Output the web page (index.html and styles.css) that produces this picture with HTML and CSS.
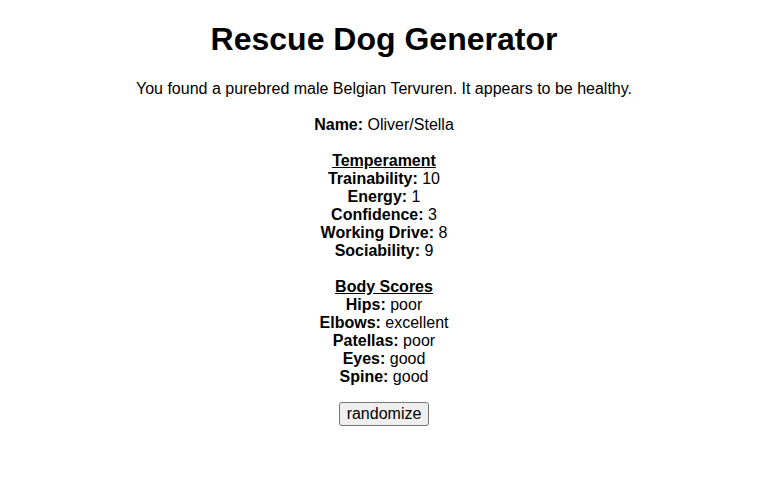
FILE: index.html
```html
<!DOCTYPE html>
<html>
<head>
<meta charset="utf-8">
<title>Rescue Dog Generator</title>
<link rel="stylesheet" href="styles.css">
</head>
<body>
<div class="app">
  <h1 class="title">Rescue Dog Generator</h1>
  <p class="intro">You found a purebred male Belgian Tervuren. It appears to be healthy.</p>
  <p class="line"><b>Name:</b> Oliver/Stella</p>
  <div class="section">
    <div class="heading">Temperament</div>
    <div><b>Trainability:</b> 10</div>
    <div><b>Energy:</b> 1</div>
    <div><b>Confidence:</b> 3</div>
    <div><b>Working Drive:</b> 8</div>
    <div><b>Sociability:</b> 9</div>
  </div>
  <div class="section section-last">
    <div class="heading">Body Scores</div>
    <div><b>Hips:</b> poor</div>
    <div><b>Elbows:</b> excellent</div>
    <div><b>Patellas:</b> poor</div>
    <div><b>Eyes:</b> good</div>
    <div><b>Spine:</b> good</div>
  </div>
  <div class="actions">
    <button class="btn" type="button">randomize</button>
  </div>
</div>
</body>
</html>
```

FILE: styles.css
```css
body {
  margin: 0;
  font-family: "Liberation Sans", Arial, sans-serif;
  font-size: 16px;
  color: #000;
  background: #fff;
}
.app {
  text-align: center;
  padding-top: 1px;
}
.title {
  font-size: 32px;
  margin: 20px 0 22px;
}
.intro, .line {
  margin: 18px 0;
}
.section {
  margin: 18px 0;
}
.section-last {
  margin-bottom: 16px;
}
.heading {
  font-weight: bold;
  text-decoration: underline;
}
.actions {
  margin-top: 16px;
}
.btn {
  vertical-align: top;
  font-family: "Liberation Sans", Arial, sans-serif;
  font-size: 16px;
  padding: 2px 7px;
  border: 1px solid #767676;
  border-radius: 3px;
  background: #efefef;
  color: #000;
}
```
